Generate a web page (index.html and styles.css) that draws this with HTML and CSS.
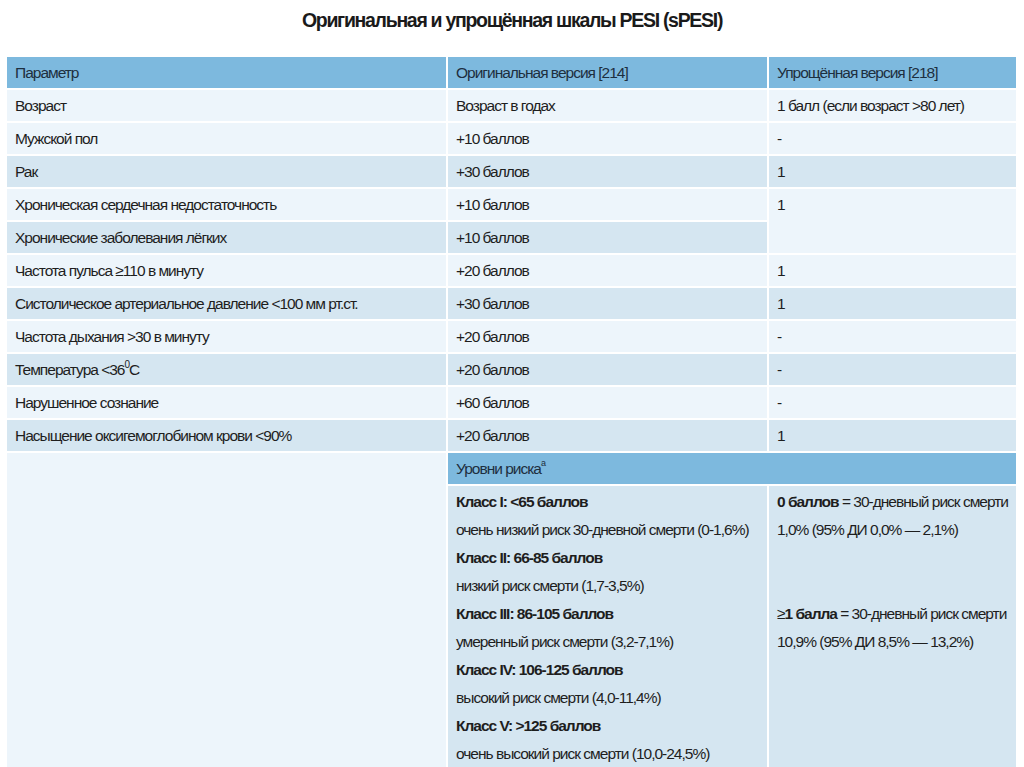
FILE: index.html
```html
<!DOCTYPE html>
<html lang="ru">
<head>
<meta charset="utf-8">
<title>PESI</title>
<link rel="stylesheet" href="styles.css">
</head>
<body>
<h1 class="title">Оригинальная и упрощённая шкалы PESI (sPESI)</h1>
<table class="pesi">
  <colgroup>
    <col class="c1"><col class="c2"><col class="c3">
  </colgroup>
  <thead>
    <tr class="head">
      <th>Параметр</th>
      <th>Оригинальная версия [214]</th>
      <th>Упрощённая версия [218]</th>
    </tr>
  </thead>
  <tbody>
    <tr class="light"><td>Возраст</td><td>Возраст в годах</td><td>1 балл (если возраст &gt;80 лет)</td></tr>
    <tr class="light"><td>Мужской пол</td><td>+10 баллов</td><td>-</td></tr>
    <tr class="dark"><td>Рак</td><td>+30 баллов</td><td>1</td></tr>
    <tr class="light"><td>Хроническая сердечная недостаточность</td><td>+10 баллов</td><td class="span-light" rowspan="2">1</td></tr>
    <tr class="dark"><td>Хронические заболевания лёгких</td><td>+10 баллов</td></tr>
    <tr class="light"><td>Частота пульса ≥110 в минуту</td><td>+20 баллов</td><td>1</td></tr>
    <tr class="dark"><td>Систолическое артериальное давление &lt;100 мм рт.ст.</td><td>+30 баллов</td><td>1</td></tr>
    <tr class="light"><td>Частота дыхания &gt;30 в минуту</td><td>+20 баллов</td><td>-</td></tr>
    <tr class="dark"><td>Температура &lt;36<sup class="deg">0</sup>C</td><td>+20 баллов</td><td>-</td></tr>
    <tr class="light"><td>Нарушенное сознание</td><td>+60 баллов</td><td>-</td></tr>
    <tr class="dark"><td>Насыщение оксигемоглобином крови &lt;90%</td><td>+20 баллов</td><td>1</td></tr>
    <tr class="risk-head">
      <td class="blank" rowspan="2"></td>
      <td class="rh" colspan="2">Уровни риска<sup class="note">a</sup></td>
    </tr>
    <tr class="risk">
      <td class="classes">
        <div class="b">Класс I: &lt;65 баллов</div>
        <div>очень низкий риск 30-дневной смерти (0-1,6%)</div>
        <div class="b">Класс II: 66-85 баллов</div>
        <div>низкий риск смерти (1,7-3,5%)</div>
        <div class="b">Класс III: 86-105 баллов</div>
        <div>умеренный риск смерти (3,2-7,1%)</div>
        <div class="b">Класс IV: 106-125 баллов</div>
        <div>высокий риск смерти (4,0-11,4%)</div>
        <div class="b">Класс V: &gt;125 баллов</div>
        <div>очень высокий риск смерти (10,0-24,5%)</div>
      </td>
      <td class="simple">
        <div class="grp">
          <div><span class="b">0 баллов</span> = 30-дневный риск смерти</div>
          <div>1,0% (95% ДИ 0,0% — 2,1%)</div>
        </div>
        <div class="grp second">
          <div>≥<span class="b">1 балла</span> = 30-дневный риск смерти</div>
          <div>10,9% (95% ДИ 8,5% — 13,2%)</div>
        </div>
      </td>
    </tr>
  </tbody>
</table>
</body>
</html>
```

FILE: styles.css
```css
html, body {
  margin: 0;
  padding: 0;
  background: #ffffff;
}

body {
  font-family: "Liberation Sans", Arial, sans-serif;
  color: #1e1e1e;
}

.title {
  margin: 8px 0 0;
  text-align: center;
  font-size: 19.5px;
  line-height: 24px;
  font-weight: bold;
  letter-spacing: -1.3px;
  color: #1a1a1a;
}

.pesi {
  margin: 23px 0 0 5px;
  width: 1013px;
  table-layout: fixed;
  border-collapse: separate;
  border-spacing: 2px;
  font-size: 15.5px;
  letter-spacing: -1px;
}

.c1 { width: 439px; }
.c2 { width: 319px; }
.c3 { width: 247px; }

.pesi th,
.pesi td {
  height: 31px;
  padding: 0 8px;
  line-height: 31px;
  vertical-align: top;
  text-align: left;
  font-weight: normal;
  white-space: nowrap;
}

.head th {
  background: #7db9de;
  color: #1d2f40;
}

.light td { background: #edf5fb; }
.dark td { background: #d5e6f1; }
.pesi td.span-light { background: #edf5fb; }

.deg {
  font-size: 10px;
  line-height: 0;
  vertical-align: 7px;
}

.risk-head td.rh {
  background: #7db9de;
  color: #1d2f40;
}

.note {
  font-size: 9px;
  line-height: 0;
  vertical-align: 8px;
}

.pesi td.blank { background: #edf5fb; }

.risk td.classes,
.risk td.simple {
  background: #d5e6f1;
  line-height: 28px;
  padding-top: 2px;
  padding-bottom: 3px;
}

.b { font-weight: bold; }

.grp.second { margin-top: 56px; }
```
